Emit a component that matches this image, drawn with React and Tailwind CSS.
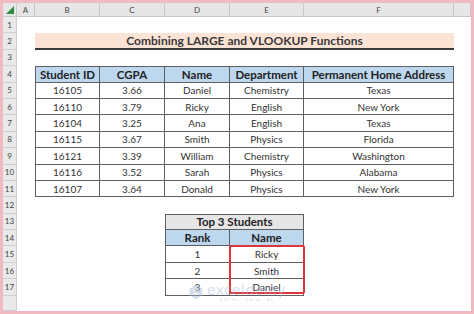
import React from 'react';

const cols = ['A', 'B', 'C', 'D', 'E', 'F', ''];

const students = [
  ['16105', '3.66', 'Daniel', 'Chemistry', 'Texas'],
  ['16110', '3.79', 'Ricky', 'English', 'New York'],
  ['16104', '3.25', 'Ana', 'English', 'Texas'],
  ['16115', '3.67', 'Smith', 'Physics', 'Florida'],
  ['16121', '3.39', 'William', 'Chemistry', 'Washington'],
  ['16116', '3.52', 'Sarah', 'Physics', 'Alabama'],
  ['16107', '3.64', 'Donald', 'Physics', 'New York'],
];

const top3 = [
  ['1', 'Ricky'],
  ['2', 'Smith'],
  ['3', 'Daniel'],
];

const cell = 'flex items-center justify-center border-r border-b border-[#5f5f5f] leading-none';

const App = () => {
  return (
    <div
      className="w-[474px] h-[314px] bg-[#f1b9c1] pt-[3px] pl-[3px] pr-[3px] pb-[3px] overflow-hidden"
      style={{ fontFamily: 'Lato, "Open Sans", sans-serif' }}
    >
      <div className="relative w-full h-full bg-white grid grid-cols-[14px_18px_65px_65px_65px_74px_150px_1fr] grid-rows-[14px_repeat(17,16.4px)_1fr] text-[#222]">
        {/* corner */}
        <div className="col-start-1 row-start-1 bg-[#e6e6e6] border-r border-b border-[#c8c8c8] relative">
          <div className="absolute right-[2px] bottom-[2px] w-0 h-0 border-l-[8px] border-l-transparent border-b-[8px] border-b-[#2f8a3d]" />
        </div>

        {/* column headers */}
        {cols.map((c, i) => (
          <div
            key={'c' + i}
            className="row-start-1 bg-[#e6e6e6] border-r border-b border-[#c8c8c8] flex items-center justify-center text-[8px] text-[#444]"
            style={{ gridColumnStart: i + 2 }}
          >
            {c}
          </div>
        ))}

        {/* row headers */}
        {Array.from({ length: 18 }).map((_, i) => (
          <div
            key={'r' + i}
            className="col-start-1 bg-[#e9e9e9] border-r border-b border-[#cfcfcf] flex items-center justify-center text-[8px] text-[#444]"
            style={{ gridRowStart: i + 2 }}
          >
            {i < 17 ? i + 1 : ''}
          </div>
        ))}

        {/* title */}
        <div className="col-start-3 col-span-5 row-start-3 bg-[#fbe4d6] border-b-2 border-[#3e3a39] flex items-center justify-center font-bold text-[12px] text-[#3b3838] leading-none">
          Combining LARGE and VLOOKUP Functions
        </div>

        {/* main table */}
        <div className="col-start-3 col-span-5 row-start-5 row-span-8 grid grid-cols-subgrid grid-rows-subgrid border-l border-t border-[#5f5f5f] text-[10px] text-[#333]">
          {['Student ID', 'CGPA', 'Name', 'Department', 'Permanent Home Address'].map((h) => (
            <div key={h} className={cell + ' bg-[#bdd7ee] font-bold text-[11.5px] text-[#222]'}>
              {h}
            </div>
          ))}
          {students.map((row, r) =>
            row.map((v, c) => (
              <div key={r + '-' + c} className={cell}>
                {v}
              </div>
            ))
          )}
        </div>

        {/* top 3 table */}
        <div className="col-start-5 col-span-2 row-start-14 row-span-5 grid grid-cols-subgrid grid-rows-subgrid border-l border-t border-[#5f5f5f] text-[10px] text-[#333]">
          <div className={cell + ' col-span-2 bg-[#e7e6e6] font-bold text-[11.5px] text-[#222]'}>Top 3 Students</div>
          <div className={cell + ' bg-[#bdd7ee] font-bold text-[11.5px] text-[#222]'}>Rank</div>
          <div className={cell + ' bg-[#bdd7ee] font-bold text-[11.5px] text-[#222]'}>Name</div>
          {top3.map(([rank, name]) => (
            <React.Fragment key={rank}>
              <div className={cell}>{rank}</div>
              <div className={cell}>{name}</div>
            </React.Fragment>
          ))}
        </div>

        {/* red highlight */}
        <div className="absolute left-[226px] top-[242px] w-[76px] h-[49px] border-[2.5px] border-[#e0333a] rounded-[2px] pointer-events-none" />

        {/* watermark */}
        <div className="absolute left-[184px] top-[278px] flex items-center gap-[2px] opacity-45 pointer-events-none">
          <svg width="18" height="18" viewBox="0 0 20 20">
            <path d="M3 6 L10 2 L17 6 L17 14 L10 18 L3 14 Z" fill="#9fb6d6" />
            <path d="M7 8 L13 8 M7 12 L13 12" stroke="#fff" strokeWidth="1.5" />
          </svg>
          <div className="flex flex-col items-center leading-none">
            <span className="text-[16px] text-[#a8bcd8] tracking-[0.5px]">exceldemy</span>
            <span className="text-[4.5px] text-[#a8b4c4] tracking-[1px] mt-[1px]">EXCEL · DATA · BI</span>
          </div>
        </div>
      </div>
    </div>
  );
};

export default App;
